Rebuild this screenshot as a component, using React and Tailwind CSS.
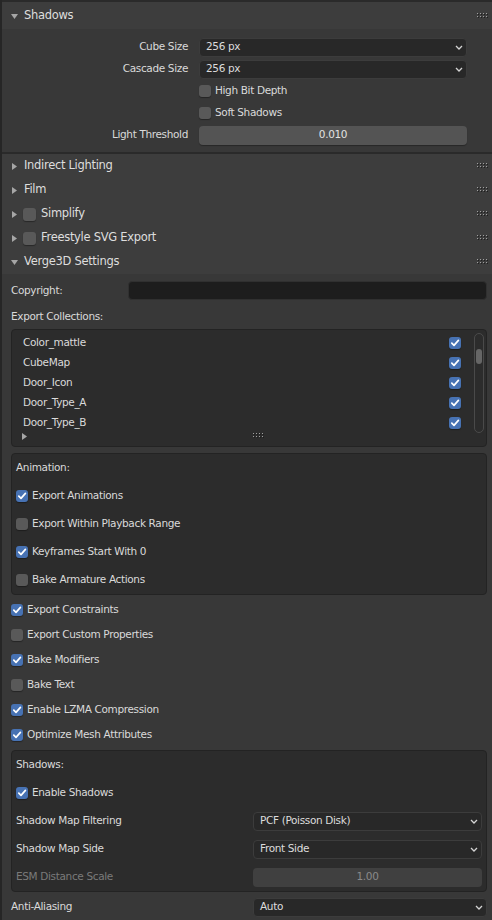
import React from "react";

const FONT = { fontFamily: '"DejaVu Sans", "Liberation Sans", sans-serif' };

const Chevron = () => (
  <svg width="8" height="5" viewBox="0 0 8 5" className="shrink-0">
    <polyline points="1,1 4,4 7,1" fill="none" stroke="#d4d4d4" strokeWidth="1.3" />
  </svg>
);

const TriDown = () => (
  <svg width="7" height="5" viewBox="0 0 7 5" className="shrink-0">
    <polygon points="0,0 7,0 3.5,5" fill="#a6a6a6" />
  </svg>
);

const TriRight = () => (
  <svg width="5" height="7" viewBox="0 0 5 7" className="shrink-0">
    <polygon points="0,0 5,3.5 0,7" fill="#a6a6a6" />
  </svg>
);

const Grip = () => (
  <svg width="11" height="6" viewBox="0 0 11 6" className="shrink-0">
    {[0, 3, 6, 9].map((x) =>
      [0, 3].map((y) => (
        <g key={x + "-" + y}>
          <rect x={x + 1} y={y + 1} width="1" height="1" fill="#1e1e1e" />
          <rect x={x} y={y} width="1" height="1" fill="#a0a0a0" />
        </g>
      ))
    )}
  </svg>
);

const Check = ({ on, size = 12 }) =>
  on ? (
    <div
      className="rounded-[3px] bg-[#4772b3] flex items-center justify-center shrink-0 shadow-[0_1px_1px_rgba(0,0,0,0.35)]"
      style={{ width: size, height: size }}
    >
      <svg width="10" height="10" viewBox="0 0 10 10">
        <polyline points="1.8,5.2 4,7.4 8.4,2.4" fill="none" stroke="#ffffff" strokeWidth="1.7" strokeLinecap="round" strokeLinejoin="round" />
      </svg>
    </div>
  ) : (
    <div
      className="rounded-[3px] bg-[#595959] shrink-0 shadow-[0_1px_1px_rgba(0,0,0,0.35)]"
      style={{ width: size, height: size }}
    />
  );

const Dropdown = ({ value, className = "" }) => (
  <div className={"h-[19px] rounded-[4px] bg-[#282828] border border-[#3c3c3c] flex items-center justify-between pl-[6px] pr-[3px] text-[#dcdcdc] " + className}>
    <span>{value}</span>
    <Chevron />
  </div>
);

const Header = ({ title, open, check, tall }) => (
  <div className={"bg-[#3d3d3d] flex items-center pl-[9px] pr-[4px] text-[11.5px] tracking-[-0.3px] text-[#dedede] " + (tall ? "h-[27px] pt-[1px]" : "h-[24px]")}>
    <div className="w-[7px] flex justify-center">{open ? <TriDown /> : <TriRight />}</div>
    {check ? (
      <div className="ml-[5px] flex items-center gap-[5px]">
        <Check on={false} size={13} />
        <span>{title}</span>
      </div>
    ) : (
      <span className="ml-[6px]">{title}</span>
    )}
    <div className="flex-1" />
    <Grip />
  </div>
);

const CheckRow = ({ on, label, h = "h-[25px]" }) => (
  <div className={"flex items-center gap-[4px] " + h}>
    <Check on={on} />
    <span>{label}</span>
  </div>
);

const collections = ["Color_mattle", "CubeMap", "Door_Icon", "Door_Type_A", "Door_Type_B"];

export default function App() {
  return (
    <div
      className="w-[492px] h-[920px] overflow-hidden bg-[#2a2a2a] flex text-[10.5px] tracking-[-0.35px] text-[#dadada]"
      style={FONT}
    >
      <div className="w-[2px] bg-[#262626] shrink-0" />
      <div className="flex-1 flex flex-col pt-[2px]">
        {/* Shadows panel */}
        <Header title="Shadows" open tall />
        <div className="bg-[#383838] pt-[8px] pb-[7px] flex flex-col gap-[2px]">
          <div className="h-[20px] flex items-center">
            <span className="w-[186px] text-right">Cube Size</span>
            <Dropdown value="256 px" className="ml-[11px] w-[268px]" />
          </div>
          <div className="h-[20px] flex items-center">
            <span className="w-[186px] text-right">Cascade Size</span>
            <Dropdown value="256 px" className="ml-[11px] w-[268px]" />
          </div>
          <div className="h-[20px] flex items-center pl-[197px] gap-[4px]">
            <Check on={false} />
            <span>High Bit Depth</span>
          </div>
          <div className="h-[20px] flex items-center pl-[197px] gap-[4px]">
            <Check on={false} />
            <span>Soft Shadows</span>
          </div>
          <div className="h-[20px] flex items-center">
            <span className="w-[186px] text-right">Light Threshold</span>
            <div className="ml-[11px] w-[268px] h-[19px] rounded-[4px] bg-[#545454] flex items-center justify-center text-[#e2e2e2] shadow-[0_1px_1px_rgba(0,0,0,0.3)]">
              0.010
            </div>
          </div>
        </div>
        <div className="h-[2px]" />
        <Header title="Indirect Lighting" />
        <Header title="Film" />
        <Header title="Simplify" check />
        <Header title="Freestyle SVG Export" check />
        <Header title="Verge3D Settings" open />

        {/* Verge3D body */}
        <div className="bg-[#383838] flex-1 pl-[9px] pr-[5px] pt-[7px] flex flex-col">
          <div className="h-[19px] flex items-center">
            <span className="w-[117px]">Copyright:</span>
            <div className="flex-1 h-[19px] rounded-[4px] bg-[#1d1d1d] border border-[#303030]" />
          </div>
          <div className="h-[20px] mt-[7px] flex items-center">Export Collections:</div>

          {/* collections list */}
          <div className="mt-[2px] h-[118px] rounded-[4px] bg-[#2c2c2c] border border-[#232323] flex flex-col">
            <div className="flex pt-[3px]">
              <div className="flex-1 flex flex-col">
                {collections.map((c) => (
                  <div key={c} className="h-[20px] flex items-center justify-between pl-[11px] pr-[6px]">
                    <span>{c}</span>
                    <Check on />
                  </div>
                ))}
              </div>
              <div className="w-[10px] mr-[2px] ml-[7px] h-[100px] rounded-full border border-[#4a4a4a] flex justify-center pt-[15px]">
                <div className="w-[6px] h-[15px] rounded-full bg-[#666666]" />
              </div>
            </div>
            <div className="h-[12px] -mt-[3px] flex items-center pl-[10px]">
              <TriRight />
              <div className="flex-1 flex justify-center pl-[3px]">
                <Grip />
              </div>
            </div>
          </div>

          {/* Animation box */}
          <div className="mt-[6px] rounded-[4px] bg-[#2c2c2c] border border-[#232323] pl-[4px] pr-[4px] flex flex-col">
            <div className="h-[28px] flex items-center">Animation:</div>
            <CheckRow on label="Export Animations" h="h-[28px]" />
            <CheckRow on={false} label="Export Within Playback Range" h="h-[28px]" />
            <CheckRow on label="Keyframes Start With 0" h="h-[28px]" />
            <CheckRow on={false} label="Bake Armature Actions" h="h-[28px]" />
          </div>

          <div className="mt-[2px] flex flex-col">
            <CheckRow on label="Export Constraints" />
            <CheckRow on={false} label="Export Custom Properties" />
            <CheckRow on label="Bake Modifiers" />
            <CheckRow on={false} label="Bake Text" />
            <CheckRow on label="Enable LZMA Compression" />
            <CheckRow on label="Optimize Mesh Attributes" />
          </div>

          {/* Shadows box */}
          <div className="mt-[3px] rounded-[4px] bg-[#2c2c2c] border border-[#232323] pl-[4px] pr-[4px] flex flex-col">
            <div className="h-[28px] flex items-center">Shadows:</div>
            <CheckRow on label="Enable Shadows" h="h-[28px]" />
            <div className="h-[28px] flex items-center">
              <span className="flex-1">Shadow Map Filtering</span>
              <Dropdown value="PCF (Poisson Disk)" className="w-[229px]" />
            </div>
            <div className="h-[28px] flex items-center">
              <span className="flex-1">Shadow Map Side</span>
              <Dropdown value="Front Side" className="w-[229px]" />
            </div>
            <div className="h-[28px] flex items-center">
              <span className="flex-1 text-[#7a7a7a]">ESM Distance Scale</span>
              <div className="w-[229px] h-[19px] rounded-[4px] bg-[#404040] flex items-center justify-center text-[#8a8a8a]">
                1.00
              </div>
            </div>
          </div>

          <div className="mt-[5px] h-[20px] flex items-center">
            <span className="flex-1">Anti-Aliasing</span>
            <Dropdown value="Auto" className="w-[234px]" />
          </div>
        </div>
      </div>
    </div>
  );
}
